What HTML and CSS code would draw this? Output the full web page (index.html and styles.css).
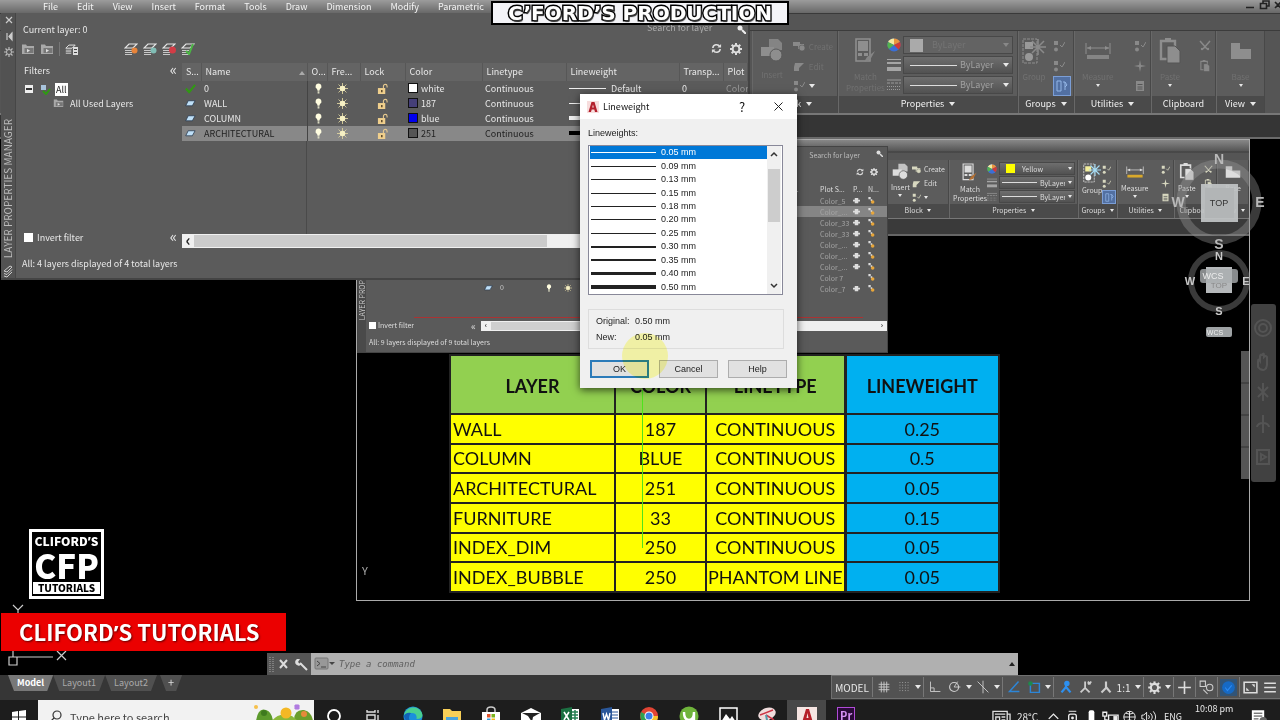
FILE: index.html
```html
<!DOCTYPE html>
<html lang="en">
<head>
<meta charset="utf-8">
<title>Layer Properties Manager</title>
<link rel="stylesheet" href="styles.css">
</head>
<body>
<svg class="defs" aria-hidden="true">
  <symbol id="bulb" viewBox="0 0 12 12"><path d="M6 0.5a3.2 3.2 0 0 1 1.6 6L7 8.500H5L4.400 6.500A3.200 3.200 0 0 1 6 .5z" fill="#fffde0"/><path d="M5 9h2v2.500H5z" fill="#d8d8c0"/></symbol>
  <symbol id="sun" viewBox="0 0 12 12"><path d="M6 0v12M0 6h12M1.700 1.700l8.600 8.600M10.300 1.700l-8.600 8.600" stroke="#d9cf9d" stroke-width="1"/><circle cx="6" cy="6" r="3" fill="#f6f0c4"/></symbol>
  <symbol id="lock" viewBox="0 0 12 12"><path d="M7 6V3.500a2 2 0 0 1 4 0V5" fill="none" stroke="#e6c98f" stroke-width="1.200"/><path d="M1 5.500h8V12H1z" fill="#f0cf8c"/><path d="M4.500 7.500h1.500v2.500H4.500z" fill="#4a3a20"/></symbol>
  <symbol id="layer" viewBox="0 0 12 8"><path d="M3.500 1H11L8 6.500H.8z" fill="#bfe0f8" stroke="#22344a" stroke-width=".8"/></symbol>
  <symbol id="tick" viewBox="0 0 12 12"><path d="M1 6l3.500 4L11 2" fill="none" stroke="#2f9a12" stroke-width="2.200"/></symbol>
  <symbol id="folder" viewBox="0 0 14 12"><path d="M1 1.500h4l1 1.500h7v8H1z" fill="#a9a9a9"/><path d="M3.500 5h9v5h-9z" fill="#777"/><path d="M6 6l3 1.500L6 9.500z" fill="#ddd"/></symbol>
  <symbol id="stack" viewBox="0 0 14 12"><path d="M5 1h8L9 5H1z" fill="none" stroke="#e8e8e8" stroke-width="1.200"/><path d="M1 7.500h7M1 9.500h7M1 11.500h7" stroke="#c8c8c8" stroke-width="1.200"/></symbol>
  <symbol id="refresh" viewBox="0 0 12 12"><path d="M2 5.500a4 4 0 0 1 7.500-1.500M10 6.500A4 4 0 0 1 2.500 8" fill="none" stroke="#ddd" stroke-width="1.800"/><path d="M11 1v4H7zM1 11V7h4z" fill="#ddd"/></symbol>
  <symbol id="gear" viewBox="0 0 12 12"><path d="M6 0v12M0 6h12M1.700 1.700l8.600 8.600M10.300 1.700l-8.600 8.600" stroke="currentColor" stroke-width="2"/><circle cx="6" cy="6" r="3.400" fill="#5a5a5a" stroke="currentColor" stroke-width="2"/></symbol>
  <symbol id="insert" viewBox="0 0 24 24"><path d="M9 1h9l4 4v7H9z" fill="currentColor" opacity=".8"/><path d="M1 9h13v9H1z" fill="currentColor"/><circle cx="16" cy="17" r="6" fill="currentColor" stroke="#5a5a5a"/></symbol>
  <symbol id="small" viewBox="0 0 12 12"><path d="M0 2h7v4H0zM5 4h6v5H5z" fill="currentColor"/><circle cx="9" cy="8" r="3" fill="currentColor" stroke="#555" stroke-width=".5"/></symbol>
  <symbol id="edit" viewBox="0 0 12 12"><path d="M2 3h9L6 8v3H1V7z" fill="currentColor"/></symbol>
  <symbol id="match" viewBox="0 0 24 26"><path d="M3 1h14v22H3z" fill="none" stroke="currentColor" stroke-width="1.600"/><path d="M5 3h10v10H5zM5 15h4v3H5zM11 15h4v3h-4z" fill="currentColor"/><path d="M22 13l-8 6-3 5 6-2z" fill="var(--brush,#858585)"/></symbol>
  <symbol id="wheel" viewBox="0 0 14 14"><circle cx="7" cy="7" r="6.500" fill="#3b6fd6"/><path d="M7 7L1 4A6.500 6.500 0 0 1 7 .5z" fill="#f5e9a0"/><path d="M7 7V.5A6.500 6.500 0 0 1 13 4z" fill="#e9963e"/><path d="M7 7l6-3a6.500 6.500 0 0 1-1.500 7.500z" fill="#cf3b35"/><path d="M7 7l-6-3a6.500 6.500 0 0 0 1 7z" fill="#54b24d"/></symbol>
  <symbol id="weights" viewBox="0 0 14 14"><path d="M0 1.500h14" stroke="#a5a5a5"/><path d="M0 5h14" stroke="#a5a5a5" stroke-width="2"/><path d="M0 11h14" stroke="#a5a5a5" stroke-width="4"/></symbol>
  <symbol id="types" viewBox="0 0 14 14"><path d="M0 2h14" stroke="#999"/><path d="M0 5h14" stroke="#999" stroke-dasharray="3 1"/><path d="M0 8.500h14M0 11.500h14" stroke="#999" stroke-dasharray="1 1"/></symbol>
  <symbol id="group" viewBox="0 0 24 26"><path d="M1 1h14v24H1z" fill="none" stroke="currentColor" stroke-dasharray="3 1"/><path d="M3 4h8v7H3z" fill="var(--g,#999)"/><circle cx="7" cy="19" r="4" fill="var(--g2,#999)"/><path d="M16 1v16M8 9h16M10 3l12 12M22 3L10 15" stroke="var(--star,#8a8a8a)" stroke-width="1.500"/></symbol>
  <symbol id="gsm" viewBox="0 0 12 12"><path d="M1 1h4v4H1z" fill="currentColor"/><circle cx="3" cy="9.500" r="2" fill="currentColor"/><path d="M7 5l2 2 3-5" stroke="currentColor" fill="none"/></symbol>
  <symbol id="gsel" viewBox="0 0 12 12"><path d="M1 1h4v10H1zM7 2h2v8M9 2l2 3-2 2" fill="none" stroke="#93b6e6"/></symbol>
  <symbol id="measure" viewBox="0 0 26 18"><path d="M1 1v11M25 1v11M2 6h22" stroke="currentColor" fill="none"/><path d="M2 6l4-2v4zM24 6l-4-2v4z" fill="currentColor"/><path d="M2 13h22v4H2z" fill="var(--rule,#858585)"/></symbol>
  <symbol id="point" viewBox="0 0 12 12"><path d="M6 0l1 5 5 1-5 1-1 5-1-5-5-1 5-1z" fill="currentColor"/></symbol>
  <symbol id="calc" viewBox="0 0 12 12"><path d="M2 1h8v10H2z" fill="currentColor"/><path d="M3.500 4.500h5M3.500 7h5M3.500 9h5" stroke="#555"/></symbol>
  <symbol id="paste" viewBox="0 0 22 26"><path d="M2 3h14v18H2z" fill="none" stroke="currentColor" stroke-width="2.400"/><path d="M6 0h6v4H6z" fill="currentColor"/><path d="M8 8h8l5 5v12H8z" fill="currentColor" stroke="#555"/></symbol>
  <symbol id="cut" viewBox="0 0 12 12"><path d="M1 1l7 8M11 1L4 9" stroke="currentColor" stroke-width="1.500"/><circle cx="3" cy="9" r="1.200" fill="currentColor"/><circle cx="9" cy="9" r="1.200" fill="currentColor"/></symbol>
  <symbol id="base" viewBox="0 0 22 18"><path d="M1 1h9v6h11v10H1z" fill="currentColor"/></symbol>
  <symbol id="print" viewBox="0 0 8 6"><path d="M2 0h4v2h2v2H6v2H2V4H0V2h2z" fill="currentColor"/></symbol>
  <symbol id="vp" viewBox="0 0 8 9"><path d="M0 0h3v3H0zM3 3h2v2H3z" fill="#ddd"/><circle cx="5.500" cy="6.500" r="2.300" fill="#e8a63a"/></symbol>
</svg>

<header class="menubar">
  <nav class="menus"><a href="#">File</a><a href="#">Edit</a><a href="#">View</a><a href="#">Insert</a><a href="#">Format</a><a href="#">Tools</a><a href="#">Draw</a><a href="#">Dimension</a><a href="#">Modify</a><a href="#">Parametric</a></nav>
  <svg class="winbtns" width="34" height="10" viewBox="0 0 34 10"><path d="M0 7.500h8M14.500 3.500h6v5h-6zM17 3V1h6v5h-2M29 2l6 6M35 2l-6 6" fill="none" stroke="#222" stroke-width="1.600"/></svg>
</header>
<div class="tabstrip"></div>

<section class="ribbon dim">
  <div class="panel p-block"><div class="pbody">
    <button class="big"><svg width="24" height="24"><use href="#insert"/></svg>Insert</button>
    <div class="smalls"><button><svg><use href="#small"/></svg>Create</button><button><svg><use href="#edit"/></svg>Edit</button><button><svg><use href="#gsm"/></svg><i class="ar"></i></button></div>
  </div><h2>Block <i class="ar"></i></h2></div>
  <div class="panel p-props"><div class="pbody">
    <button class="big"><svg width="24" height="26"><use href="#match"/></svg>Match<br>Properties</button>
    <div class="drops">
      <label><svg><use href="#wheel"/></svg><span class="dd flat"><b class="chip"></b><select aria-label="Color"><option>ByLayer</option></select><i class="ar"></i></span></label>
      <label><svg><use href="#weights"/></svg><span class="dd"><b class="ln"></b><select aria-label="Lineweight"><option>ByLayer</option></select><i class="ar"></i></span></label>
      <label><svg><use href="#types"/></svg><span class="dd"><b class="ln"></b><select aria-label="Linetype"><option>ByLayer</option></select><i class="ar"></i></span></label>
    </div>
  </div><h2>Properties <i class="ar"></i></h2></div>
  <div class="panel p-groups"><div class="pbody">
    <button class="big"><svg width="24" height="26"><use href="#group"/></svg>Group</button>
    <div class="smalls"><button><svg><use href="#gsm"/></svg></button><button><svg><use href="#gsm"/></svg></button><button class="on"><svg><use href="#gsel"/></svg></button></div>
  </div><h2>Groups <i class="ar"></i></h2></div>
  <div class="panel p-utils"><div class="pbody">
    <button class="big"><svg width="26" height="26"><use href="#measure"/></svg>Measure<i class="ar"></i></button>
    <div class="smalls"><button><svg><use href="#gsm"/></svg></button><button><svg><use href="#point"/></svg></button><button><svg><use href="#calc"/></svg></button></div>
  </div><h2>Utilities <i class="ar"></i></h2></div>
  <div class="panel p-clip"><div class="pbody">
    <button class="big"><svg width="22" height="26"><use href="#paste"/></svg>Paste<i class="ar"></i></button>
    <div class="smalls"><button><svg><use href="#cut"/></svg></button><button><svg><use href="#paste"/></svg></button></div>
  </div><h2>Clipboard</h2></div>
  <div class="panel p-view"><div class="pbody">
    <button class="big"><svg width="22" height="26"><use href="#base"/></svg>Base<i class="ar"></i></button>
  </div><h2>View <i class="ar"></i></h2></div>
</section>
<div class="filetabs"></div>

<main class="canvas">
  <section class="picture">
    <div class="pic-top"></div>
    <div class="ribbon mini">
      <div class="panel p-block"><div class="pbody">
        <button class="big"><svg width="17" height="17"><use href="#insert"/></svg>Insert<i class="ar"></i></button>
        <div class="smalls"><button><svg><use href="#small"/></svg>Create</button><button><svg><use href="#edit"/></svg>Edit</button><button><svg><use href="#gsm"/></svg><i class="ar"></i></button></div>
      </div><h2>Block <i class="ar"></i></h2></div>
      <div class="panel p-props"><div class="pbody">
        <button class="big"><svg width="17" height="19"><use href="#match"/></svg>Match<br>Properties</button>
        <div class="drops">
          <label><svg><use href="#wheel"/></svg><span class="dd"><b class="chip"></b><select aria-label="Picture color"><option>Yellow</option></select><i class="ar"></i></span></label>
          <label><svg><use href="#weights"/></svg><span class="dd"><b class="ln"></b><select aria-label="Picture lineweight"><option>ByLayer</option></select><i class="ar"></i></span></label>
          <label><svg><use href="#types"/></svg><span class="dd"><b class="ln"></b><select aria-label="Picture linetype"><option>ByLayer</option></select><i class="ar"></i></span></label>
        </div>
      </div><h2>Properties <i class="ar"></i></h2></div>
      <div class="panel p-groups"><div class="pbody">
        <button class="big"><svg width="18" height="20"><use href="#group"/></svg>Group</button>
        <div class="smalls"><button><svg><use href="#gsm"/></svg></button><button><svg><use href="#gsm"/></svg></button><button class="on"><svg><use href="#gsel"/></svg></button></div>
      </div><h2>Groups <i class="ar"></i></h2></div>
      <div class="panel p-utils"><div class="pbody">
        <button class="big"><svg width="18" height="18"><use href="#measure"/></svg>Measure<i class="ar"></i></button>
        <div class="smalls"><button><svg><use href="#gsm"/></svg></button><button><svg><use href="#point"/></svg></button><button><svg><use href="#calc"/></svg></button></div>
      </div><h2>Utilities <i class="ar"></i></h2></div>
      <div class="panel p-clip"><div class="pbody">
        <button class="big"><svg width="16" height="18"><use href="#paste"/></svg>Paste<i class="ar"></i></button>
        <div class="smalls"><button><svg><use href="#cut"/></svg></button><button><svg><use href="#paste"/></svg></button></div>
      </div><h2>Clipboard</h2></div>
      <div class="panel p-view"><div class="pbody">
        <button class="big"><svg width="16" height="18"><use href="#base"/></svg>Base</button>
      </div><h2>View <i class="ar"></i></h2></div>
    </div>
    <div class="pic-tabs"></div>

    <div class="palette2">
      <div class="side2"><span>LAYER PROPERTIES</span></div>
      <div class="body2">
        <div class="find2"><span>Search for layer</span><svg width="7" height="7" viewBox="0 0 7 7"><circle cx="2.500" cy="2.500" r="2" fill="#ddd"/><path d="M4 4l3 3" stroke="#ddd" stroke-width="1.500"/></svg></div>
        <div class="tools2"><svg width="8" height="8"><use href="#refresh"/></svg><svg width="8" height="8"><use href="#gear"/></svg></div>
        <div class="list2">
          <div class="lastrow"><svg width="9" height="6"><use href="#layer"/></svg><span>0</span><svg class="b" width="8" height="8"><use href="#bulb"/></svg><svg width="8" height="8"><use href="#sun"/></svg></div>
          <table>
            <thead><tr><th>ansp...</th><th>Plot S...</th><th>P...</th><th>N...</th></tr></thead>
            <tbody>
              <tr><td></td><td>Color_5</td><td><svg><use href="#print"/></svg></td><td><svg><use href="#vp"/></svg></td></tr>
              <tr class="sel"><td></td><td>Color_...</td><td><svg><use href="#print"/></svg></td><td><svg><use href="#vp"/></svg></td></tr>
              <tr><td></td><td>Color_33</td><td><svg><use href="#print"/></svg></td><td><svg><use href="#vp"/></svg></td></tr>
              <tr><td></td><td>Color_33</td><td><svg><use href="#print"/></svg></td><td><svg><use href="#vp"/></svg></td></tr>
              <tr><td></td><td>Color_...</td><td><svg><use href="#print"/></svg></td><td><svg><use href="#vp"/></svg></td></tr>
              <tr><td></td><td>Color_...</td><td><svg><use href="#print"/></svg></td><td><svg><use href="#vp"/></svg></td></tr>
              <tr><td></td><td>Color_...</td><td><svg><use href="#print"/></svg></td><td><svg><use href="#vp"/></svg></td></tr>
              <tr><td></td><td>Color 7</td><td></td><td><svg><use href="#vp"/></svg></td></tr>
              <tr><td></td><td>Color_7</td><td><svg><use href="#print"/></svg></td><td><svg><use href="#vp"/></svg></td></tr>
            </tbody>
          </table>
        </div>
        <div class="redline"></div>
        <div class="foot2"><label><input type="checkbox">Invert filter</label><span>«</span><div class="bar2"><i>‹</i><b></b><i>›</i></div></div>
        <div class="status2">All: 9 layers displayed of 9 total layers</div>
      </div>
    </div>

    <table class="spec">
      <colgroup><col class="s1"><col class="s2"><col class="s3"><col class="s4"></colgroup>
      <thead><tr><th>LAYER</th><th>COLOR</th><th>LINETYPE</th><th>LINEWEIGHT</th></tr></thead>
      <tbody>
        <tr><td>WALL</td><td>187</td><td>CONTINUOUS</td><td>0.25</td></tr>
        <tr><td>COLUMN</td><td>BLUE</td><td>CONTINUOUS</td><td>0.5</td></tr>
        <tr><td>ARCHITECTURAL</td><td>251</td><td>CONTINUOUS</td><td>0.05</td></tr>
        <tr><td>FURNITURE</td><td>33</td><td>CONTINUOUS</td><td>0.15</td></tr>
        <tr><td>INDEX_DIM</td><td>250</td><td>CONTINUOUS</td><td>0.05</td></tr>
        <tr><td>INDEX_BUBBLE</td><td>250</td><td>PHANTOM LINE</td><td>0.05</td></tr>
      </tbody>
    </table>
    <div class="greenline"></div>
    <span class="axis2">Y</span>
  </section>

  <svg class="cube" width="110" height="200" viewBox="0 0 110 200" font-family="Liberation Sans, sans-serif" text-anchor="middle">
    <circle cx="52" cy="56" r="38" fill="none" stroke="#999" stroke-opacity=".38" stroke-width="9"/>
    <path d="M34 38h37v38H34z" fill="#bfc2c3" fill-opacity=".94"/><path d="M38 42h29v30H38z" fill="#b2b5b6"/>
    <text x="52" y="60" font-size="9" fill="#333">TOP</text>
    <g fill="#b9b9b9" font-size="14" font-weight="bold"><text x="52" y="18">N</text><text x="11" y="61">W</text><text x="93" y="61">E</text><text x="52" y="103">S</text></g>
    <circle cx="52" cy="135" r="28" fill="none" stroke="#999" stroke-opacity=".38" stroke-width="6"/>
    <path d="M39 121h26v26H39z" fill="#b5b8ba"/><text x="52" y="142" font-size="8" fill="#888">TOP</text>
    <rect x="33" y="123" width="38" height="14" rx="3" fill="#aaaeb0" fill-opacity=".8"/><text x="46" y="133" font-size="9" fill="#ececec">WCS</text>
    <g fill="#c9c9c9" font-size="11" font-weight="bold"><text x="52" y="114">N</text><text x="23" y="139">W</text><text x="79" y="139">E</text><text x="52" y="169">S</text></g>
    <rect x="39" y="181" width="26" height="10" rx="2" fill="#9ea2a4"/><text x="48" y="189" font-size="7" fill="#eee">WCS</text>
  </svg>
  <svg class="navbar" width="36" height="180" viewBox="0 0 36 180"><rect x="0" y="48" width="8" height="128" fill="#555"/><path d="M0 80h8M0 112h8M0 144h8" stroke="#333"/><rect x="10" y="1" width="25" height="178" rx="3" fill="#414141"/><g fill="none" stroke="#545454" stroke-width="2"><circle cx="22" cy="25" r="8"/><circle cx="22" cy="25" r="4"/><path d="M17 64v-6q0-3 2 0v-5q1-3 2 0v-1q2-3 2 0v2q2-2 3 0v8q-1 7-7 4zM17 84l10 10M27 84L17 94M22 80v18M16 124a6 4 0 1 1 12 0M22 112v18M16 147h12v14H16zM20 151l5 3-5 3z"/></g></svg>

  <svg class="ucs" width="70" height="64" viewBox="0 0 70 64"><path d="M13 1l5 5 5-5M18 6v5M13 12v41h40M9 53h8v8H9zM57 47l9 9M66 47l-9 9" fill="none" stroke="#ccc" stroke-width="1.200"/></svg>
  <div class="logo"><span class="l1">CLIFORD<q>’</q>S</span><span class="l2">CFP</span><span class="l3">TUTORIALS</span></div>
  <div class="ribbonname">CLIFORD<q>’</q>S TUTORIALS</div>

  <form class="cmd">
    <svg class="grip" width="44" height="22" viewBox="0 0 44 22"><path d="M3 4v15M6 4v15" stroke="#8c8c8c" stroke-width="1.500" stroke-dasharray="1 1"/><path d="M13 7l7 8M20 7l-7 8M33 10l7 7" stroke="#ddd" stroke-width="2"/><path d="M30 6a3.500 3.500 0 1 0 5 4l-2 1-2-2 2-3z" fill="#ddd"/></svg>
    <svg class="prompt" width="22" height="16" viewBox="0 0 22 16"><rect x="1" y="2" width="13" height="11" rx="1" fill="#989898" stroke="#777"/><path d="M3 5l3 2.500L3 10M7 11h5" stroke="#444" fill="none"/><path d="M15 6h6l-3 3z" fill="#444"/></svg>
    <input type="text" placeholder="Type a command" aria-label="Command">
    <i class="ar up"></i>
  </form>

  <section class="palette">
    <div class="side">
      <svg width="14" height="46" viewBox="0 0 14 46"><path d="M5 4l6 6M11 4l-6 6M6 20v7M11 20l-3 3.500 3 3.500z" stroke="#ccc" fill="#ccc" stroke-width="1.200"/><path d="M8 34v10M3 39h10M4.500 35.500l7 7M11.500 35.500l-7 7" stroke="#bbb" stroke-width="1.200"/><circle cx="8" cy="39" r="2.500" fill="#555" stroke="#bbb"/></svg>
      <span>LAYER PROPERTIES MANAGER</span>
      <svg width="14" height="14" viewBox="0 0 14 14"><path d="M3 7l6-5 2 1-5 5zM3 9.500l3 1 5-5M3 12l3 1 5-5" fill="none" stroke="#ccc"/></svg>
    </div>
    <div class="pal">
      <div class="current"><span>Current layer: 0</span><input type="search" placeholder="Search for layer" aria-label="Search for layer"><svg width="9" height="9" viewBox="0 0 9 9"><circle cx="3" cy="3" r="2.500" fill="#eee"/><path d="M5 5l4 4" stroke="#eee" stroke-width="2"/></svg></div>
      <div class="tools">
        <svg width="14" height="12"><use href="#folder"/></svg><svg width="14" height="12"><use href="#folder"/></svg><i class="sep"></i><svg width="14" height="12" viewBox="0 0 14 12"><use href="#stack" width="11" height="12"/><path d="M8 4h5v8H8z" fill="#ddd"/><path d="M9 6.500h3M9 9.500h3" stroke="#444"/></svg>
        <svg class="gap" width="14" height="12" viewBox="0 0 14 12"><use href="#stack" width="14" height="12"/><circle cx="10.500" cy="7.500" r="3" fill="#e8843a"/></svg><svg width="14" height="12" viewBox="0 0 14 12"><use href="#stack" width="14" height="12"/><circle cx="10.500" cy="7.500" r="3" fill="#80bdb5"/></svg><svg width="14" height="12" viewBox="0 0 14 12"><use href="#stack" width="14" height="12"/><circle cx="10.500" cy="7" r="3.500" fill="#d23c46"/></svg><svg width="14" height="12" viewBox="0 0 14 12"><use href="#stack" width="14" height="12"/><path d="M5 8l3 3 4-10" fill="none" stroke="#4bb544" stroke-width="2"/></svg>
        <svg class="right" width="11" height="11"><use href="#refresh"/></svg><svg class="lt" width="12" height="12"><use href="#gear"/></svg>
      </div>
      <div class="work">
        <div class="filters">
          <div class="fhead"><span>Filters</span><b>«</b></div>
          <div class="node"><i class="minus"></i><svg width="11" height="11" viewBox="0 0 11 11"><path d="M1 1h5v5H1z" fill="#a8c4dc"/><path d="M3 7l3 3 4-5" stroke="#2f9a12" stroke-width="2" fill="none"/></svg><mark>All</mark></div>
          <div class="node sub"><svg width="11" height="10"><use href="#folder"/></svg><span>All Used Layers</span></div>
          <div class="invert"><label><input type="checkbox">Invert filter</label><b>«</b></div>
        </div>
        <div class="layers">
          <table>
            <colgroup><col class="c1"><col class="c2"><col class="c3"><col class="c4"><col class="c5"><col class="c6"><col class="c7"><col class="c8"><col class="c9"><col></colgroup>
            <thead><tr><th>S...</th><th>Name<i class="ar up"></i></th><th>O...</th><th>Fre...</th><th>Lock</th><th>Color</th><th>Linetype</th><th>Lineweight</th><th>Transp...</th><th>Plot S</th></tr></thead>
            <tbody>
              <tr><td><svg><use href="#tick"/></svg></td><td>0</td><td><svg><use href="#bulb"/></svg></td><td><svg><use href="#sun"/></svg></td><td><svg><use href="#lock"/></svg></td><td><b class="sw white"></b>white</td><td>Continuous</td><td><b class="lw"></b>Default</td><td>0</td><td>Color</td></tr>
              <tr><td><svg><use href="#layer"/></svg></td><td>WALL</td><td><svg><use href="#bulb"/></svg></td><td><svg><use href="#sun"/></svg></td><td><svg><use href="#lock"/></svg></td><td><b class="sw c187"></b>187</td><td>Continuous</td><td><b class="lw"></b></td><td></td><td></td></tr>
              <tr><td><svg><use href="#layer"/></svg></td><td>COLUMN</td><td><svg><use href="#bulb"/></svg></td><td><svg><use href="#sun"/></svg></td><td><svg><use href="#lock"/></svg></td><td><b class="sw blue"></b>blue</td><td>Continuous</td><td><b class="lw thick"></b></td><td></td><td></td></tr>
              <tr class="sel"><td><svg><use href="#layer"/></svg></td><td>ARCHITECTURAL</td><td><svg><use href="#bulb"/></svg></td><td><svg><use href="#sun"/></svg></td><td><svg><use href="#lock"/></svg></td><td><b class="sw c251"></b>251</td><td>Continuous</td><td><b class="lw thick black"></b></td><td></td><td></td></tr>
            </tbody>
          </table>
          <div class="empty"></div>
          <div class="hscroll"><i>‹</i><b></b></div>
        </div>
      </div>
      <div class="stat">All: 4 layers displayed of 4 total layers</div>
    </div>
  </section>

  <section class="dialog" role="dialog" aria-label="Lineweight">
    <header><svg width="12" height="12" viewBox="0 0 12 12"><path d="M0 0h12v12H0z" fill="#f7dddd"/><path d="M1.500 11L4.500 1h3l3 10H8L7.300 8.500H4.700L4 11zM5.200 6.500h1.600L6 3.500z" fill="#b3202c" fill-rule="evenodd"/></svg><span>Lineweight</span><button aria-label="Help on lineweights">?</button><button class="x" aria-label="Close"><svg width="9" height="9" viewBox="0 0 9 9"><path d="M.5.5l8 8M8.500.5l-8 8" stroke="#222"/></svg></button></header>
    <div class="dbody">
      <p id="lwl">Lineweights:</p>
      <div class="lbox">
        <ul role="listbox" aria-labelledby="lwl">
          <li class="on" role="option" aria-selected="true"><b></b>0.05 mm</li><li role="option"><b></b>0.09 mm</li><li role="option"><b></b>0.13 mm</li><li role="option"><b></b>0.15 mm</li><li role="option"><b></b>0.18 mm</li><li role="option"><b></b>0.20 mm</li><li role="option"><b></b>0.25 mm</li><li role="option"><b class="t2"></b>0.30 mm</li><li role="option"><b class="t2"></b>0.35 mm</li><li role="option"><b class="t3"></b>0.40 mm</li><li role="option"><b class="t4"></b>0.50 mm</li>
        </ul>
        <div class="vscroll"><svg width="8" height="6" viewBox="0 0 8 6"><path d="M1 5l3-3 3 3" fill="none" stroke="#333" stroke-width="1.500"/></svg><b></b><svg width="8" height="6" viewBox="0 0 8 6"><path d="M1 1l3 3 3-3" fill="none" stroke="#333" stroke-width="1.500"/></svg></div>
      </div>
      <dl><dt>Original:</dt><dd>0.50 mm</dd><dt>New:</dt><dd>0.05 mm</dd></dl>
      <div class="btns"><button class="def">OK</button><button>Cancel</button><button>Help</button></div>
    </div>
    <div class="halo"></div>
  </section>
</main>

<footer class="bottom">
  <nav class="sheets"><a class="cur" href="#">Model</a><a href="#">Layout1</a><a href="#">Layout2</a><a class="plus" href="#">+</a></nav>
  <div class="status">
    <span class="w40">MODEL</span><i class="sep"></i>
    <svg class="w20" viewBox="0 0 20 20"><path d="M4 7h12M4 10h12M4 13h12M7 4v12M10 4v12M13 4v12" stroke="#ccc"/></svg>
    <svg class="w20" viewBox="0 0 20 20"><path d="M5 5h11M5 8h11M5 11h11M5 14h11" stroke="#aaa" stroke-dasharray="1 2"/></svg>
    <i class="ar"></i><i class="sep"></i>
    <svg class="w20" viewBox="0 0 20 20"><path d="M5 4v11h11M5 11h4v4" fill="none" stroke="#ccc"/></svg>
    <svg class="w20" viewBox="0 0 20 20"><circle cx="9" cy="10" r="5" fill="none" stroke="#ccc" stroke-width="1.300"/><path d="M9 10h7M9 10l4-6" stroke="#ccc"/></svg>
    <i class="ar"></i>
    <svg class="w20" viewBox="0 0 20 20"><path d="M4 4l12 12M10 3v14" stroke="#ccc" fill="none"/></svg>
    <i class="ar"></i><i class="sep"></i>
    <svg class="w20" viewBox="0 0 20 20"><path d="M15 4L5 15h11" fill="none" stroke="#2d86d8" stroke-width="1.600"/></svg>
    <svg class="w20" viewBox="0 0 20 20"><path d="M6 6h10v10H6z" fill="none" stroke="#2d86d8" stroke-width="1.600"/><circle cx="6" cy="6" r="2.500" fill="#1e8a4a"/></svg>
    <i class="ar"></i><i class="sep"></i>
    <svg class="w20" viewBox="0 0 20 20"><path d="M10 5v5l-5 6M10 10l5 6" stroke="#2d90f0" stroke-width="2.500" fill="none"/><circle cx="11" cy="6" r="3" fill="#2d90f0"/></svg>
    <svg class="w20" viewBox="0 0 20 20"><path d="M9 4v7l-5 5M9 11l5 5M12 7l4-3M12 4l3 3" stroke="#ccc" stroke-width="2" fill="none"/></svg>
    <svg class="w20" viewBox="0 0 20 20"><path d="M10 4v7l-5 5M10 10l5 6" stroke="#ccc" stroke-width="2.400" fill="none"/></svg>
    <span class="w24">1:1</span><i class="ar"></i><i class="sep"></i>
    <svg class="w16" viewBox="-2 -2 16 16" color="#ddd"><use href="#gear" width="12" height="12"/></svg><i class="ar"></i><i class="sep"></i>
    <svg class="w16" viewBox="0 0 16 16"><path d="M8 2v12M2 8h12" stroke="#ddd" stroke-width="1.500"/></svg><i class="sep"></i>
    <svg class="w16" viewBox="0 0 16 16"><path d="M2 2h5v5H2zM5 10l4 4M9 10h5" fill="none" stroke="#ccc"/><circle cx="11" cy="8" r="3" fill="#535353" stroke="#ccc"/></svg><i class="sep"></i>
    <svg class="w16 bluebg" viewBox="0 0 16 16"><circle cx="8" cy="8" r="6" fill="#1669c4"/><path d="M5 8l2 3 4-5" stroke="#2b8af5" fill="none"/></svg><i class="sep"></i>
    <svg class="w16" viewBox="0 0 16 16"><path d="M2 3h12v10H2z" fill="none" stroke="#ddd" stroke-width="1.500"/><path d="M9 5h3v3zM4 8v3h3z" fill="#ddd"/></svg>
    <svg class="w16" viewBox="0 0 16 16"><path d="M3 4h11M3 8h11M3 12h11" stroke="#ddd" stroke-width="1.500"/></svg>
  </div>
</footer>

<footer class="taskbar">
  <svg class="win" width="14" height="14" viewBox="0 0 14 14"><path d="M0 2l6-1v5.500H0zM7 1l7-1v6.500H7zM0 7.500h6V13l-6-1zM7 7.500h7V14l-7-1z" fill="#fff"/></svg>
  <label class="search"><svg width="12" height="12" viewBox="0 0 12 12"><circle cx="7" cy="5" r="4" fill="none" stroke="#333" stroke-width="1.200"/><path d="M4 8l-4 4" stroke="#333" stroke-width="1.200"/></svg><input type="text" placeholder="Type here to search" aria-label="Type here to search">
    <svg width="60" height="20" viewBox="0 0 60 20"><path d="M2 20q2-14 10-11 6 2 7 11z" fill="#5c9a2c"/><path d="M40 20q0-12 10-11 8 2 9 11z" fill="#6b9e2b"/><path d="M18 20q6-9 20-5l6 5z" fill="#8bb83a"/><circle cx="32" cy="12" r="5.500" fill="#f4b824"/><path d="M41 4l4 4M45 4l-4 4" stroke="#b07be0" stroke-width="3"/><circle cx="2" cy="6" r="2" fill="#f6c04a"/><circle cx="10" cy="12" r="3" fill="#3e7a1e"/><circle cx="50" cy="13" r="3" fill="#e58a3a"/></svg></label>
  <div class="apps">
    <span><svg viewBox="0 0 20 20"><circle cx="10" cy="10" r="6" fill="none" stroke="#fff" stroke-width="1.800"/></svg></span>
    <span><svg viewBox="0 0 20 20"><path d="M4 4v2h8V4M4 9h8v5H4zM15 4v3M15 9v6" fill="none" stroke="#ddd" stroke-width="1.400"/></svg></span>
    <span><svg viewBox="0 0 20 20"><circle cx="10" cy="10" r="9.500" fill="#1b8fdc"/><path d="M1 9C3-1 18-1 19.500 9q0 4-6 4 1-6-5-6-5 0-7.500 2z" fill="#48cf91"/><path d="M1 10Q3 6 8 7q-4 4 0 10-6-1-7-7z" fill="#1162b8"/></svg></span>
    <span><svg viewBox="0 0 20 20"><path d="M1 3h7l2 2h9v13H1z" fill="#f8cf57"/><path d="M4 11h12v7H4z" fill="#4aa3dc"/></svg></span>
    <span><svg viewBox="0 0 20 20"><path d="M6 6V4q0-3 4-3t4 3v2" fill="none" stroke="#ccc" stroke-width="1.500"/><path d="M1 6h18v14H1z" fill="#fff"/><path d="M6 8h3.500v3.500H6z" fill="#e2542c"/><path d="M10.500 8H14v3.500h-3.500z" fill="#7bb41d"/><path d="M6 12.500h3.500V16H6z" fill="#2a9be0"/><path d="M10.500 12.500H14V16h-3.500z" fill="#f4b71c"/></svg></span>
    <span><svg viewBox="0 0 20 20"><path d="M0 7l10-5 10 5v12H0z" fill="#fff"/><path d="M1 7h18l-7 4-1 5-4-6z" fill="#222"/></svg></span>
    <span><svg viewBox="0 0 20 20"><path d="M10 3h9v15h-9z" fill="#fff"/><path d="M12 6h6M12 9h6M12 12h6M15 4v14" stroke="#258052" stroke-width="1.500"/><path d="M1 3l11-2v19L1 18z" fill="#1c7042"/><path d="M4 6l5 8M9 6l-5 8" stroke="#fff" stroke-width="1.600"/></svg></span>
    <span><svg viewBox="0 0 20 20"><path d="M10 3h9v15h-9z" fill="#fff"/><path d="M12 6h6M12 9h6M12 12h6" stroke="#2a579a"/><path d="M1 3l11-2v19L1 18z" fill="#2a579a"/><path d="M3 7l1.500 7 2-6 2 6L10 7" stroke="#fff" fill="none" stroke-width="1.400"/></svg></span>
    <span><svg viewBox="0 0 20 20"><circle cx="10" cy="10" r="9" fill="#e14434"/><path d="M10 10L2 6q-3 8 6 13z" fill="#2fa04f"/><path d="M10 10h9q0 8-9 9z" fill="#f6c32b"/><circle cx="10" cy="10" r="4.500" fill="#fff"/><circle cx="10" cy="10" r="3.500" fill="#3c7ee8"/></svg></span>
    <span><svg viewBox="0 0 20 20"><circle cx="10" cy="10" r="9.500" fill="#6fb43b"/><path d="M5 6q0 8 5 8t5-8M15 6v8" fill="none" stroke="#fff" stroke-width="2.400"/></svg></span>
    <span><svg viewBox="0 0 20 20"><path d="M2 2h17v17H2z" fill="none" stroke="#fff" stroke-width="1.500"/><path d="M3 16l5-8 4 5 2-3 4 6v3H3z" fill="#fff"/></svg></span>
    <span><svg viewBox="0 0 20 20"><ellipse cx="10" cy="8" rx="9" ry="6" fill="#f0dcdc" transform="rotate(-20 10 8)"/><path d="M3 9l13-5M9 9l8 5" stroke="#c34" stroke-width="1.500"/><path d="M9 9l2 10" stroke="#59a" stroke-width="2"/></svg></span>
    <span class="act"><svg viewBox="0 0 20 20"><path d="M0 1h20v19H0z" fill="#f6e5e2"/><path d="M4 20L9 3h3l5 17h-4l-1-5H9l-1 5zM9.500 12h2L10.500 7z" fill="#b51f28" fill-rule="evenodd"/></svg></span>
    <span><b class="pr">Pr</b></span>
  </div>
  <div class="tray">
    <svg viewBox="0 0 20 14"><path d="M1 1h15v12H1zM16 4h3v9h-3M3 4h11M4 7h4v4H4zM10 7h4M10 10h4" fill="none" stroke="#ddd" stroke-width="1.400"/></svg>
    <span class="temp">28°C</span>
    <svg viewBox="0 0 20 14"><path d="M5 9l5-5 5 5" fill="none" stroke="#eee" stroke-width="1.400"/></svg>
    <svg viewBox="0 0 20 14"><rect x="6" y="4" width="8" height="8" rx="2" fill="none" stroke="#eee" stroke-width="1.400"/><path d="M6 1h8" stroke="#eee"/><circle cx="10" cy="8" r="1.500" fill="#eee"/></svg>
    <svg viewBox="0 0 20 14"><rect x="7" y="0" width="6" height="12" rx="2" fill="#fff"/></svg>
    <svg viewBox="0 0 20 14"><path d="M8 5h10v7H8zM2 2h4v4H2zM4 6v4h3" fill="none" stroke="#eee" stroke-width="1.400"/><path d="M13 6h4v5h-4z" fill="#eee"/></svg>
    <svg viewBox="0 0 20 14"><circle cx="10" cy="7" r="6" fill="none" stroke="#eee"/><path d="M4 7h12M10 1v12M6 3q4 2 8 0M6 11q4-2 8 0" fill="none" stroke="#eee"/></svg>
    <svg viewBox="0 0 20 14"><path d="M3 5h2l3-3v10L5 9H3zM10 5q2 2 0 4M12 3q4 4 0 8M15 1q5 6 0 12" fill="none" stroke="#eee"/></svg>
    <span class="eng">ENG</span><time>10:08 pm</time>
    <svg viewBox="0 0 20 14"><path d="M3 0h13v13H8l-2 3v-3H3z" fill="#fff"/><path d="M5 3h9M5 6h9M5 9h5" stroke="#333"/><circle cx="15" cy="11" r="4" fill="#666"/></svg>
  </div>
</footer>
<div class="banner">C’FORD’S PRODUCTION</div>
</body>
</html>
```
FILE: styles.css
```css
* { box-sizing: border-box; }
html, body { height: 100%; margin: 0; }
body {
  display: flex; flex-direction: column; position: relative; overflow: hidden;
  background: #000; color: #e8e8e8;
  font-family: "Noto Sans CJK SC", "Noto Sans", sans-serif; font-size: 9px; line-height: 15px;
}
.defs { position: absolute; width: 0; height: 0; }
button, input, select { font: inherit; color: inherit; margin: 0; padding: 0; border: 0; background: none; }
a { color: inherit; text-decoration: none; }
i { font-style: normal; }
svg { flex: none; display: block; }
.ar { display: inline-block; flex: none; width: 0; height: 0; border: 3px solid transparent; border-top: 4px solid #e8e8e8; border-bottom: 0; }
.ar.up { border-top: 0; border-bottom: 4px solid #aaa; }

/* menu bar */
.menubar { flex: 0 0 14px; display: flex; justify-content: space-between; background: linear-gradient(#9c9c9c, #686868); border-bottom: 1px solid #3a3a3a; }
.menus { display: flex; gap: 19px; padding-left: 43px; line-height: 13px; color: #f4f4f4; }
.winbtns { margin-right: 0; }
.tabstrip { flex: 0 0 17px; background: #555; border-bottom: 1px solid #3c3c3c; }

/* ribbon */
.ribbon { flex: 0 0 84px; display: flex; justify-content: flex-end; padding-right: 15px; background: #555; border-bottom: 2px solid #777; color: #717171; }
.panel { display: flex; flex-direction: column; background: #5c5c5c; border-right: 1px solid #484848; border-left: 1px solid #686868; }
.pbody { flex: 1; display: flex; justify-content: space-between; padding: 5px 4px 0 7px; min-height: 0; }
.panel h2 { margin: 0; height: 17px; font-size: 9px; line-height: 16px; font-weight: 400; text-align: center; background: #4a4a4a; color: #f0f0f0; white-space: nowrap; }
.panel h2 .ar { margin: 0 0 1px 3px; }
.big { display: flex; flex-direction: column; align-items: center; font-size: 8px; line-height: 11px; white-space: nowrap; align-self: flex-start; }
.big svg { margin: 2px 0 7px; color: #8e8e8e; }
.big .ar { margin-top: 2px; border-width: 2px; border-top-width: 3px; border-bottom: 0; }
.smalls { display: grid; grid-auto-rows: 20px; align-content: start; }
.smalls button { display: flex; align-items: center; gap: 4px; font-size: 8px; }
.smalls svg { width: 12px; height: 12px; color: #898989; }
.smalls .on { width: 18px; justify-content: center; background: #5270a2; border: 1px solid #7b9ed6; }
.p-block { width: 86px; } .p-props { width: 180px; } .p-groups { width: 56px; }
.p-utils { width: 77px; } .p-clip { width: 65px; } .p-view { width: 49px; }
.p-groups .pbody { padding: 5px 2px 0 3px; }
.p-view .pbody { justify-content: center; padding-left: 4px; }
.drops { display: grid; grid-template-rows: repeat(3, 18px); gap: 2px; }
.drops label { display: flex; align-items: center; gap: 2px; }
.drops label > svg { width: 14px; height: 14px; }
.dd { width: 110px; height: 18px; display: flex; align-items: center; gap: 3px; padding: 0 3px 0 6px; background: linear-gradient(#6e6e6e, #525252); border: 1px solid #484848; color: #a0a0a0; }
.dd select { flex: 1; min-width: 0; appearance: none; line-height: 14px; }
.flat { background: #636363; color: #747474; }
.flat .chip { margin-right: 6px; } .flat .ar { border-top-color: #888; }
.chip { width: 13px; height: 13px; background: #aaa; }
.ln { width: 47px; height: 1px; background: #ddd; }
.filetabs { flex: 0 0 24px; background: #353535; border-bottom: 2px solid #6a6a6a; }

/* drawing area */
.canvas { flex: 1; min-height: 0; position: relative; background: #000; }
.picture { position: absolute; left: 356px; top: 0; width: 894px; height: 462px; border: 1px solid #aaa; display: flex; flex-direction: column; }
.pic-top { flex: 0 0 20px; background: linear-gradient(#888 0, #555 11px, #3c3c3c 12px, #555 13px); }
.mini { flex: 0 0 59px; padding: 0; --brush: #b57032; --g: #f2ee9c; --g2: #fff; --star: #a5dcf5; --rule: #d9a92c; color: #ddd; border-bottom: 1px solid #777; }
.mini .panel h2 { height: 14px; font-size: 7px; line-height: 13px; color: #ddd; }
.mini .pbody { padding: 2px 3px 0; }
.mini .big { font-size: 7px; line-height: 9px; }
.mini .big svg { margin: 1px 0 3px; color: #ddd; }
.mini .smalls { grid-auto-rows: 14px; }
.mini .smalls button { font-size: 7px; gap: 3px; line-height: 12px; }
.mini .smalls svg { width: 9px; height: 9px; color: #d8d8c0; }
.mini .smalls .on { width: 14px; }
.mini .ar { border-width: 2px; border-top-width: 3px; border-bottom: 0; }
.mini .p-block { width: 62px; } .mini .p-props { width: 129px; } .mini .p-groups { width: 39px; }
.mini .p-utils { width: 57px; } .mini .p-clip { width: 43px; } .mini .p-view { width: 32px; }
.mini .drops { grid-template-rows: repeat(3, 13px); gap: 1px; }
.mini .drops label > svg { width: 10px; height: 10px; }
.mini .dd { width: 76px; height: 13px; color: #ddd; padding: 0 2px; }
.mini .dd select { font-size: 7px; line-height: 10px; }
.mini .chip { width: 9px; height: 9px; background: #ff0; margin: 0 4px; }
.mini .ln { width: 35px; }
.pic-tabs { flex: 0 0 17px; background: #3a3a3a; border-bottom: 2px solid #666; }

.palette2 { position: absolute; left: 0; top: 6px; width: 531px; height: 207px; display: flex; background: #5a5a5a; border: 1px solid #444; font-size: 7px; line-height: 11px; color: #ccc; }
.side2 { width: 8px; background: #4a4a4a; overflow: hidden; }
.side2 span { display: block; writing-mode: vertical-rl; transform: rotate(180deg); margin-top: 110px; line-height: 8px; }
.body2 { flex: 1; display: flex; flex-direction: column; min-width: 0; }
.find2, .tools2 { display: flex; justify-content: flex-end; gap: 16px; padding: 3px 4px 0 0; color: #bbb; }
.tools2 { gap: 6px; padding: 7px 9px 7px 0; color: #ddd; }
.list2 { flex: 1; display: flex; justify-content: space-between; align-items: flex-start; }
.lastrow { display: flex; align-items: center; gap: 7px; padding: 99px 0 0 118px; }
.lastrow .b { margin: 0 4px 0 34px; }
.list2 table { width: 110px; table-layout: fixed; border-collapse: collapse; }
.list2 th, .list2 td { padding: 0; height: 11px; line-height: 10px; font-weight: 400; text-align: left; white-space: nowrap; overflow: hidden; color: #a5a5a5; }
.list2 th { color: #ddd; height: 12px; }
.list2 th:nth-child(1) { width: 43px; } .list2 th:nth-child(2) { width: 33px; } .list2 th:nth-child(3) { width: 15px; }
.list2 td svg { width: 7px; height: 7px; color: #ddd; }
.list2 .sel { background: #858585; }
.redline { height: 1px; margin: 0 24px 2px 48px; background: #a33; }
.foot2 { display: flex; align-items: center; padding-left: 3px; color: #ddd; }
.foot2 label { display: flex; align-items: center; gap: 2px; width: 102px; }
.foot2 input { appearance: none; width: 7px; height: 7px; background: #fff; }
.foot2 > span { font-size: 10px; }
.bar2 { margin-left: auto; width: 406px; height: 10px; display: flex; align-items: center; background: #f0f0f0; color: #222; font-weight: 700; }
.bar2 b { flex: 1; height: 8px; margin-right: 90px; background: #cfcfcf; }
.bar2 i { width: 10px; text-align: center; }
.status2 { padding: 6px 0 4px 3px; color: #ddd; }

.spec { position: absolute; left: 92px; top: 214px; width: 551px; height: 239px; table-layout: fixed; border-collapse: collapse; border: 2px solid #b4c83c; color: #111; font-family: Lato, sans-serif; font-size: 18px; line-height: 24px; }
.s1 { width: 165px; } .s2 { width: 91px; } .s3 { width: 139px; }
.spec td, .spec th { padding: 1px 0; border: 2px solid #222; text-align: center; white-space: nowrap; background: #ff0; }
.spec td:first-child { text-align: left; padding-left: 2px; }
.spec th { height: 59px; padding-top: 4px; background: #92d050; }
.spec td:last-child, .spec th:last-child { background: #00b0f0; border-left-width: 3px; }
.greenline { position: absolute; left: 285px; top: 250px; width: 1px; height: 158px; background: #4ee31c; }
.axis2 { position: absolute; left: 5px; bottom: 22px; color: #aaa; font-size: 11px; }

.cube { position: absolute; left: 1167px; top: 7px; }
.navbar { position: absolute; left: 1241px; top: 164px; }
.ucs { position: absolute; left: 0; top: 465px; }
q { quotes: none; font-family: "Noto Sans", sans-serif; }
.logo { position: absolute; left: 29px; top: 390px; width: 75px; border: 3px solid #fff; background: #000; display: flex; flex-direction: column; align-items: center; color: #fff; font-weight: 900; padding: 1px 1px 2px; }
.l1 { font-size: 12px; line-height: 16px; white-space: nowrap; }
.l2 { font-size: 33px; line-height: 31px; }
.l3 { align-self: stretch; margin-top: 1px; background: #fff; color: #000; font-size: 10px; line-height: 12px; text-align: center; }
.ribbonname { position: absolute; left: 1px; top: 474px; width: 285px; padding-left: 18px; background: #eb0000; color: #fff; font-size: 22px; line-height: 37px; height: 38px; font-weight: 700; white-space: nowrap; text-shadow: 1px 1px 2px #600; }

.cmd { position: absolute; left: 267px; bottom: 0; width: 751px; height: 22px; display: flex; align-items: center; background: #b0b0b0; }
.grip { background: #555; }
.prompt { margin: 0 3px; }
.cmd input { flex: 1; height: 20px; font: italic 9px "DejaVu Sans Mono", monospace; outline: 0; }
.cmd input::placeholder { color: #606060; opacity: 1; }
.cmd .ar { margin-right: 3px; border-bottom-color: #222; }

/* layer palette */
.palette { position: absolute; left: 1px; top: -126px; width: 749px; height: 267px; display: flex; background: #5b5b5b; border-bottom: 2px solid #444; border-right: 2px solid #444; }
.side { flex: 0 0 15px; background: #525252; border-right: 1px solid #464646; display: flex; flex-direction: column; justify-content: space-between; align-items: center; }
.side span { writing-mode: vertical-rl; transform: rotate(180deg); font-size: 10px; line-height: 14px; color: #bbb; margin-top: auto; margin-bottom: 6px; white-space: nowrap; }
.pal { flex: 1; min-width: 0; display: flex; flex-direction: column; padding-top: 9px; }
.current { display: flex; align-items: center; padding: 0 2px 0 7px; }
.current input { margin-left: auto; width: 90px; outline: 0; height: 11px; margin-bottom: 4px; }
.current input::placeholder { color: #aaa; opacity: 1; }
.tools { display: flex; align-items: center; gap: 5px; padding: 4px 6px 0 5px; height: 19px; margin-bottom: 7px; color: #ddd; }
.tools .sep { width: 1px; height: 14px; background: #777; }
.tools .gap { margin-left: 40px; }
.tools .right { margin-left: auto; } .tools .lt { margin-left: 3px; }
.work { flex: 1; display: flex; min-height: 0; }
.filters { flex: 0 0 166px; display: flex; flex-direction: column; padding: 0 5px 0 8px; }
.fhead, .invert { display: flex; justify-content: space-between; }
.fhead b, .invert b { font-size: 15px; line-height: 12px; font-weight: 400; }
.fhead { margin-bottom: 4px; }
.node { display: flex; align-items: center; gap: 7px; height: 14px; padding-left: 1px; }
.minus { width: 8px; height: 8px; background: #eee; border: 1px solid #eee; display: flex; align-items: center; }
.minus::after { content: ""; flex: 1; height: 2px; background: #333; }
.node mark { background: #fff; color: #222; line-height: 13px; padding: 0 1px; margin-left: -3px; }
.node.sub { padding-left: 29px; gap: 6px; }
.invert { margin-top: auto; margin-bottom: 5px; }
.invert label { display: flex; align-items: center; gap: 4px; }
.invert input { appearance: none; width: 9px; height: 9px; background: #fff; }
.layers { flex: 1; min-width: 0; display: flex; flex-direction: column; }
.layers table { width: 100%; table-layout: fixed; border-collapse: collapse; }
.layers th, .layers td { padding: 0 0 0 2px; font-weight: 400; text-align: left; height: 15px; line-height: 14px; white-space: nowrap; overflow: hidden; }
.layers th { height: 18px; background: #646464; border-right: 1px solid #575757; padding-left: 4px; }
.layers td { padding-left: 3px; }
.layers th .ar { float: right; margin: 6px 2px 0 0; }
.layers td svg { width: 11px; height: 11px; }
.layers td:nth-child(4) svg { margin-left: 7px; } .layers td:nth-child(5) svg { margin-left: 14px; } .layers td:nth-child(3) svg { margin-left: 2px; }
.layers td:last-child { color: #999; }
.layers .sel { background: #888; color: #222; }
.layers td:nth-child(2) { border-right: 1px solid #444; }
.c1 { width: 19px; } .c2 { width: 106px; } .c3 { width: 20px; } .c4 { width: 33px; } .c5 { width: 45px; } .c6 { width: 77px; } .c7 { width: 84px; } .c8 { width: 113px; } .c9 { width: 44px; }
.sw { display: inline-block; width: 10px; height: 10px; margin-right: 3px; border: 1px solid #111; vertical-align: -1px; }
.white { background: #fff; } .c187 { background: #453f78; } .blue { background: #00e; } .c251 { background: #555; }
.lw { display: inline-block; width: 37px; height: 1px; background: #eee; vertical-align: 3px; margin-right: 5px; }
.thick { height: 4px; vertical-align: 2px; } .black { background: #000; }
.empty { flex: 1; width: 125px; border-right: 1px solid #4a4a4a; }
.hscroll { height: 14px; display: flex; background: #f0f0f0; color: #222; margin-bottom: 2px; }
.hscroll i { width: 12px; text-align: center; font-size: 16px; line-height: 11px; font-weight: 700; }
.hscroll b { width: 353px; background: #cbcbcb; margin: 1px 0; }
.stat { padding: 6px 0 7px 6px; }

/* lineweight dialog */
.dialog { position: absolute; left: 580px; top: -45px; width: 217px; height: 294px; display: flex; flex-direction: column; background: #f0f0f0; color: #222; box-shadow: 0 2px 8px #000a; }
.dialog header { flex: 0 0 25px; display: flex; align-items: center; padding: 0 14px 0 7px; background: #fff; color: #111; }
.dialog header span { margin: 0 auto 0 4px; }
.dialog header button { width: 12px; font-size: 13px; }
.dialog .x { margin-left: 26px; width: 9px; }
.dbody { flex: 1; display: flex; flex-direction: column; padding: 6px 10px 10px 8px; font-family: "Liberation Sans", sans-serif; font-size: 9px; }
.dbody p { margin: 1px 0 4px; }
.lbox { display: flex; width: 195px; border: 1px solid #889; background: #fff; padding: 0 1px; }
.lbox ul { flex: 1; margin: 0; padding: 0; list-style: none; display: grid; grid-template-rows: repeat(11, 1fr); height: 148px; }
.lbox li { display: flex; align-items: center; gap: 5px; line-height: 13px; }
.lbox li b { width: 65px; margin-left: 1px; height: 1px; background: #222; }
.lbox li .t2 { height: 2px; } .lbox li .t3 { height: 3px; } .lbox li .t4 { height: 4px; }
.lbox .on { background: #0078d7; color: #fff; } .lbox .on b { background: #fff; }
.vscroll { width: 14px; display: flex; flex-direction: column; align-items: center; background: #f0f0f0; padding: 5px 0; }
.vscroll b { width: 12px; height: 53px; margin-top: 12px; margin-bottom: auto; background: #cdcdcd; }
.dbody dl { display: grid; grid-template-columns: 39px auto; margin: 14px 3px 0 0; padding: 4px 7px 3px; height: 40px; border: 1px solid #ddd; }
.dbody dd { margin: 0; }
.btns { display: flex; justify-content: space-between; margin: auto 0 0 2px; }
.btns button { width: 59px; height: 18px; line-height: 15px; background: #e1e1e1; border: 1px solid #adadad; }
.btns .def { border: 2px solid #2b7bb9; line-height: 13px; }
.halo { position: absolute; left: 42px; top: 239px; width: 46px; height: 46px; border-radius: 50%; background: #ffff0050; mix-blend-mode: multiply; }

/* sheet tabs and status bar */
.bottom { flex: 0 0 25px; display: flex; justify-content: space-between; background: #363636; }
.sheets { display: flex; padding-left: 8px; align-items: flex-start; }
.sheets a { padding: 0 9px 1px; background: #505050; color: #aaa; line-height: 15px; clip-path: polygon(0 0, 100% 0, calc(100% - 6px) 100%, 6px 100%); }
.sheets .cur { background: #787878; color: #fff; font-weight: 700; }
.sheets .plus { padding: 0 8px 1px; margin-left: 3px; color: #ddd; font-size: 11px; }
.status { display: flex; align-items: center; justify-content: space-between; width: 449px; height: 24px; padding: 0 2px; background: #525252; border: 1px solid #707070; border-right: 0; font-size: 10px; }
.status .sep { width: 1px; height: 20px; background: #777; }
.w40 { width: 36px; text-align: center; } .w24 { width: 16px; }
.w20 { width: 18px; height: 18px; } .w16 { width: 17px; height: 17px; }
.bluebg { background: #315477; }

.taskbar { flex: 0 0 20px; min-height: 0; height: 20px; display: flex; align-items: flex-start; background: #1d1d1d; overflow: hidden; }
.win { margin: 10px 12px 0; }
.search { display: flex; align-items: flex-start; width: 276px; height: 30px; background: #f2f2f2; color: #333; padding-left: 12px; }
.search > svg:first-child { margin-top: 10px; }
.search input { flex: 1; min-width: 0; margin: 8px 0 0 8px; outline: 0; height: 18px; font-size: 11px; line-height: 18px; }
.search input::placeholder { color: #444; opacity: 1; }
.search > svg:last-child { margin-top: 1px; }
.apps { display: flex; width: 552px; }
.apps span { flex: 1; display: flex; justify-content: center; height: 30px; padding-top: 6px; }
.apps svg { height: 20px; width: 20px; }
.apps .act { background: #484848; }
.pr { width: 18px; height: 18px; margin-top: 1px; border: 1px solid #b04bd8; background: #2a0a38; color: #d691f5; font-weight: 700; font-size: 11px; line-height: 15px; text-align: center; }
.tray { margin-left: auto; display: flex; padding-right: 12px; }
.tray svg { width: 19px; height: 14px; margin-top: 10px; }
.temp { font-size: 10px; width: 33px; text-align: center; margin-top: 9px; }
.eng { margin: 9px 0 0 6px; width: 31px; }
.tray time { margin: 1px 14px 0 0; width: 40px; white-space: nowrap; }

.banner { position: absolute; left: 491px; top: 1px; width: 298px; height: 24px; background: #f4f4f8; border: 2px solid #000; text-align: center; white-space: nowrap; color: #fff; font: bold 20px/20px "DejaVu Sans", sans-serif; -webkit-text-stroke: 3px #000; paint-order: stroke; text-shadow: 1px 2px 1px #333; }
```
